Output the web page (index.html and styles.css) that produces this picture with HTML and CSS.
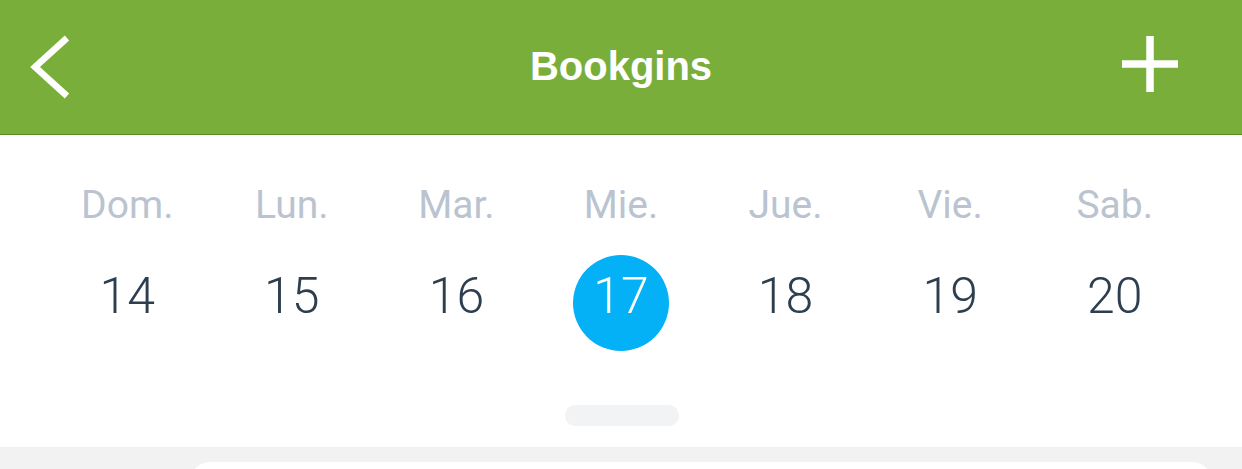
FILE: index.html
```html
<!DOCTYPE html>
<html>
<head>
<meta charset="utf-8">
<link rel="stylesheet" href="styles.css">
</head>
<body>
<div class="app">
  <header class="header">
    <div class="header-left">
      <svg class="back" width="44" height="68" viewBox="0 0 44 68"><polyline points="37,5 5,34 37,63" fill="none" stroke="#fff" stroke-width="6.5" stroke-linejoin="miter"/></svg>
    </div>
    <h1 class="title">Bookgins</h1>
    <div class="header-right">
      <svg class="plus" width="56" height="56" viewBox="0 0 56 56"><path d="M28 0V56M0 28H56" stroke="#fff" stroke-width="7.5" fill="none"/></svg>
    </div>
  </header>
  <section class="week">
    <div class="row labels">
      <span>Dom.</span><span>Lun.</span><span>Mar.</span><span>Mie.</span><span>Jue.</span><span>Vie.</span><span>Sab.</span>
    </div>
    <div class="row days">
      <div class="day">14</div>
      <div class="day">15</div>
      <div class="day">16</div>
      <div class="day selected">17</div>
      <div class="day">18</div>
      <div class="day">19</div>
      <div class="day">20</div>
    </div>
    <div class="handle"></div>
  </section>
  <section class="list">
    <div class="card"></div>
  </section>
</div>
</body>
</html>
```
FILE: styles.css
```css
html, body {
  margin: 0;
  padding: 0;
  background: #ffffff;
}
body {
  width: 1242px;
  height: 469px;
  overflow: hidden;
  font-family: Roboto, "Liberation Sans", sans-serif;
}
.app {
  display: flex;
  flex-direction: column;
  height: 469px;
  overflow: hidden;
}
.header {
  flex-shrink: 0;
  height: 134px;
  background: #79ae3a;
  border-bottom: 1px solid #5c8c2c;
  display: grid;
  grid-template-columns: 1fr auto 1fr;
  align-items: center;
}
.header-left {
  display: flex;
  padding-left: 30px;
}
.header-right {
  display: flex;
  justify-content: flex-end;
  padding-right: 64px;
  padding-bottom: 6px;
}
.back, .plus {
  display: block;
}
.title {
  margin: 0;
  font-family: "Liberation Sans", Arial, sans-serif;
  font-weight: bold;
  font-size: 40px;
  color: #ffffff;
  line-height: 1;
  padding-bottom: 2px;
}
.week {
  flex-shrink: 0;
  padding: 47px 45px 0;
  display: flex;
  flex-direction: column;
  align-items: stretch;
}
.row {
  display: grid;
  grid-template-columns: repeat(7, 1fr);
  justify-items: center;
}
.labels span {
  font-size: 39px;
  line-height: 46px;
  color: #bac4d0;
  font-weight: 400;
}
.days {
  margin-top: 27px;
}
.day {
  width: 96px;
  height: 96px;
  box-sizing: border-box;
  padding-bottom: 14px;
  border-radius: 50%;
  display: flex;
  align-items: center;
  justify-content: center;
  font-size: 50px;
  line-height: 1;
  font-weight: 300;
  color: #2d3e4e;
}
.day.selected {
  background: #04b0f6;
  color: #ffffff;
}
.handle {
  align-self: center;
  width: 114px;
  height: 21px;
  border-radius: 10px;
  background: #f2f3f5;
  margin-top: 54px;
  margin-left: 1px;
  margin-bottom: 21px;
}
.list {
  flex: 1;
  min-height: 0;
  overflow: hidden;
  background: #f2f2f2;
  padding-top: 15px;
}
.card {
  margin-left: 190px;
  width: 1022px;
  height: 60px;
  background: #ffffff;
  border-radius: 20px 20px 0 0;
}
```
